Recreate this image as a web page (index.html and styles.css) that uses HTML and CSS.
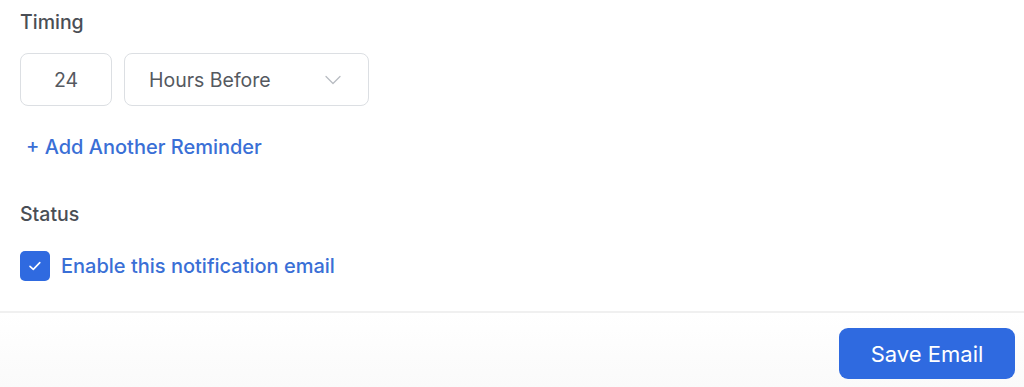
FILE: index.html
```html
<!DOCTYPE html>
<html lang="en">
<head>
    <meta charset="UTF-8">
    <meta name="viewport" content="width=device-width, initial-scale=1.0">
    <title>Reminder Email</title>
    <link rel="stylesheet" href="styles.css">
</head>
<body>
    <div class="form-body">
        <div class="field-label">Timing</div>
        <div class="timing-row">
            <input type="text" class="amount-input" value="24">
            <div class="unit-select">
                <span>Hours Before</span>
                <svg class="chevron" width="16" height="10" viewBox="0 0 16 10" fill="none">
                    <path d="M1 1.5 L8 8.5 L15 1.5" stroke="#b8bcc2" stroke-width="1.3" stroke-linecap="round" stroke-linejoin="round"/>
                </svg>
            </div>
        </div>
        <a href="#" class="add-link">+ Add Another Reminder</a>

        <div class="field-label status-label">Status</div>
        <label class="check-row">
            <span class="checkbox">
                <svg width="16" height="16" viewBox="0 0 16 16" fill="none">
                    <path d="M3 8.4 L6.3 11.4 L12.8 4.6" stroke="white" stroke-width="1.6" stroke-linecap="round" stroke-linejoin="round"/>
                </svg>
            </span>
            <span class="check-text">Enable this notification email</span>
        </label>
    </div>
    <div class="form-footer">
        <button class="save-btn">Save Email</button>
    </div>
</body>
</html>
```

FILE: styles.css
```css
body {
    margin: 0;
    font-family: Inter, "Liberation Sans", Arial, sans-serif;
    background-color: #ffffff;
    color: #4a4e55;
}
.form-body {
    padding: 11px 20px 0 20px;
    height: 311px;
    box-sizing: border-box;
}
.field-label {
    font-size: 19.5px;
    font-weight: 500;
    color: #4a4e55;
    line-height: 22px;
}
.timing-row {
    display: flex;
    gap: 12px;
    margin-top: 20px;
}
.amount-input {
    width: 92px;
    height: 53px;
    box-sizing: border-box;
    border: 1px solid #dcdfe3;
    border-radius: 8px;
    font-family: inherit;
    font-size: 19.5px;
    color: #55595f;
    text-align: center;
    padding: 0;
    outline: none;
}
.unit-select {
    width: 245px;
    height: 53px;
    box-sizing: border-box;
    border: 1px solid #dcdfe3;
    border-radius: 8px;
    display: flex;
    align-items: center;
    justify-content: space-between;
    padding: 0 27px 0 24px;
    font-size: 19.5px;
    color: #55595f;
}
.add-link {
    display: inline-block;
    margin-top: 30px;
    margin-left: 6px;
    font-size: 20px;
    font-weight: 500;
    color: #3a6fd6;
    text-decoration: none;
    line-height: 22px;
}
.status-label {
    margin-top: 45px;
}
.check-row {
    display: flex;
    align-items: center;
    gap: 11px;
    margin-top: 26px;
}
.checkbox {
    width: 30px;
    height: 30px;
    border-radius: 5px;
    background-color: #2f6ae0;
    display: flex;
    align-items: center;
    justify-content: center;
}
.check-text {
    font-size: 20px;
    font-weight: 500;
    color: #3a6fd6;
}
.form-footer {
    border-top: 2px solid #f0f0f0;
    background: linear-gradient(#ffffff, #fafafa);
    height: 76px;
    display: flex;
    justify-content: flex-end;
    align-items: flex-start;
    padding: 15px 9px 0 0;
    box-sizing: border-box;
}
.save-btn {
    width: 176px;
    height: 51px;
    border: none;
    border-radius: 9px;
    background-color: #2f6ae0;
    color: white;
    font-family: inherit;
    font-size: 22px;
    font-weight: 400;
    cursor: pointer;
}
```
